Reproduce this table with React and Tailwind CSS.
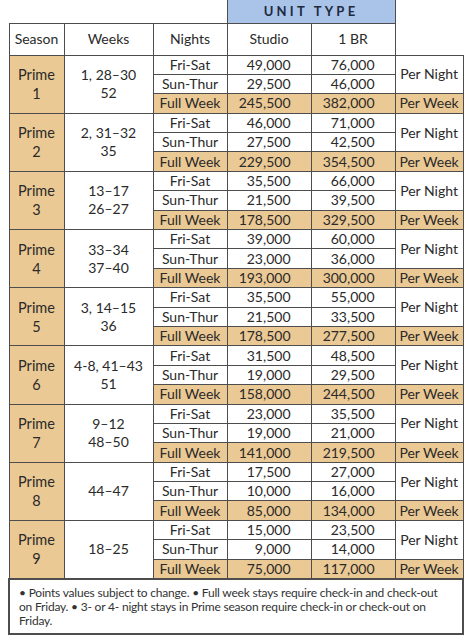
import React from 'react'

const blocks = [
  { season: '1', weeks: ['1, 28–30', '52'], rows: [['49,000', '76,000'], ['29,500', '46,000'], ['245,500', '382,000']] },
  { season: '2', weeks: ['2, 31–32', '35'], rows: [['46,000', '71,000'], ['27,500', '42,500'], ['229,500', '354,500']] },
  { season: '3', weeks: ['13–17', '26–27'], rows: [['35,500', '66,000'], ['21,500', '39,500'], ['178,500', '329,500']] },
  { season: '4', weeks: ['33–34', '37–40'], rows: [['39,000', '60,000'], ['23,000', '36,000'], ['193,000', '300,000']] },
  { season: '5', weeks: ['3, 14–15', '36'], rows: [['35,500', '55,000'], ['21,500', '33,500'], ['178,500', '277,500']] },
  { season: '6', weeks: ['4-8, 41–43', '51'], rows: [['31,500', '48,500'], ['19,000', '29,500'], ['158,000', '244,500']] },
  { season: '7', weeks: ['9–12', '48–50'], rows: [['23,000', '35,500'], ['19,000', '21,000'], ['141,000', '219,500']] },
  { season: '8', weeks: ['44–47'], rows: [['17,500', '27,000'], ['10,000', '16,000'], ['85,000', '134,000']] },
  { season: '9', weeks: ['18–25'], rows: [['15,000', '23,500'], ['9,000', '14,000'], ['75,000', '117,000']] },
]

const nights = ['Fri-Sat', 'Sun-Thur', 'Full Week']
const line = 'border border-[#4d4d4d]'
const tan = 'bg-[#ebc994]'

function Block({ b }) {
  return (
    <>
      {b.rows.map((r, i) => {
        const full = i === 2
        return (
          <tr key={i} className="h-[19.4px]">
            {i === 0 && (
              <td rowSpan={3} className={`${line} ${tan} text-center text-[14.5px] leading-[19px]`}>
                Prime<br />{b.season}
              </td>
            )}
            {i === 0 && (
              <td rowSpan={3} className={`${line} bg-white text-center leading-[18px]`}>
                {b.weeks.map((w, k) => <div key={k}>{w}</div>)}
              </td>
            )}
            <td className={`${line} text-center ${full ? tan : 'bg-white'}`}>{nights[i]}</td>
            <td className={`${line} text-right pr-5 ${full ? tan : 'bg-white'}`}>{r[0]}</td>
            <td className={`${line} text-right pr-5 ${full ? tan : 'bg-white'}`}>{r[1]}</td>
            {i === 0 && <td rowSpan={2} className={`${line} bg-white text-center`}>Per Night</td>}
            {full && <td className={`${line} ${tan} text-center`}>Per Week</td>}
          </tr>
        )
      })}
    </>
  )
}

export default function App() {
  return (
    <div className="w-[474px] h-[637px] overflow-hidden bg-white pl-2 text-[14px] leading-[16px] text-[#2a2a2a]" style={{ fontFamily: 'Lato, "Open Sans", sans-serif' }}>
      <table className="border-collapse table-fixed w-[454px]">
        <colgroup>
          <col className="w-[55px]" />
          <col className="w-[89px]" />
          <col className="w-[74px]" />
          <col className="w-[84px]" />
          <col className="w-[84px]" />
          <col className="w-[68px]" />
        </colgroup>
        <tbody>
          <tr className="h-[23px]">
            <td colSpan={3}></td>
            <td colSpan={2} className="bg-[#a9c4e8] border-x border-[#4d4d4d] text-center font-bold tracking-[0.25em] text-[13px] text-[#1d2a40]">
              UNIT TYPE
            </td>
            <td></td>
          </tr>
          <tr className="h-[32px]">
            <td className={`${line} text-center`}>Season</td>
            <td className={`${line} text-center`}>Weeks</td>
            <td className={`${line} text-center`}>Nights</td>
            <td className={`${line} text-center`}>Studio</td>
            <td className={`${line} text-center`}>1 BR</td>
            <td></td>
          </tr>
          {blocks.map((b, i) => <Block key={i} b={b} />)}
          <tr>
            <td colSpan={6} className="border-2 border-[#4d4d4d] pl-[9px] pr-[20px] pt-[6px] pb-[5px] text-[12px] tracking-[-0.2px] leading-[14px] text-[#333]">
              • Points values subject to change. • Full week stays require check-in and check-out on Friday. • 3- or 4- night stays in Prime season require check-in or check-out on Friday.
            </td>
          </tr>
        </tbody>
      </table>
    </div>
  )
}
